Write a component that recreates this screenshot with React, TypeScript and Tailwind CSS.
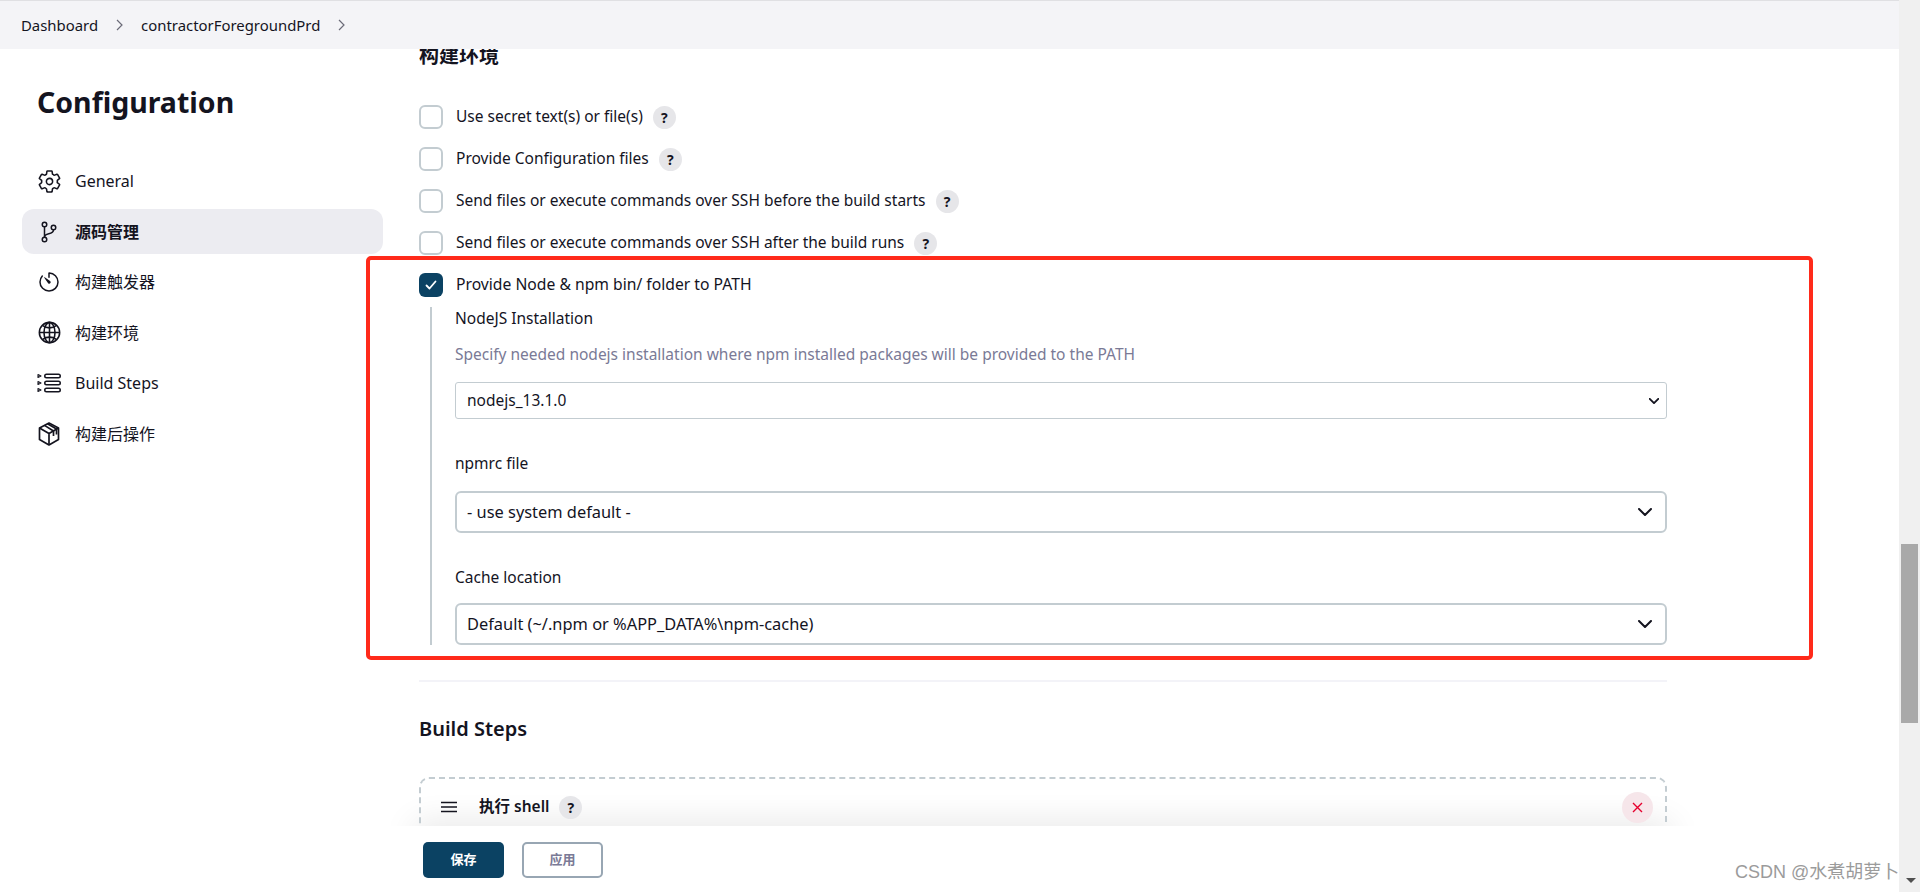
import React from 'react';
import { IoSettingsOutline, IoGitBranchOutline, IoTimerOutline, IoGlobeOutline } from 'react-icons/io5';

const font = "font-['Noto_Sans','Noto_Sans_CJK_SC',sans-serif]";

// Jenkins "build steps" list icon
const StepsIcon = () => (
    <svg width="24" height="24" viewBox="0 0 24 24" fill="none" stroke="#14141f" strokeWidth="1.5">
        <path d="M1 3.5 4 5 1 6.5Z M1 10.5 4 12 1 13.5Z M1 17.5 4 19 1 20.5Z" strokeLinejoin="round" strokeWidth="1.1" />
        <rect x="7.75" y="3.25" width="15.5" height="3.5" rx="1.75" />
        <rect x="7.75" y="10.25" width="15.5" height="3.5" rx="1.75" />
        <rect x="7.75" y="17.25" width="15.5" height="3.5" rx="1.75" />
    </svg>
);

const BoxIcon = () => (
    <svg width="24" height="24" viewBox="0 0 24 24" fill="none" stroke="#14141f" strokeWidth="1.7" strokeLinejoin="round">
        <path d="M12 1 21.5 6V17.5L12 23 2.5 17.5V6Z" />
        <path d="M2.5 6 12 11.5 21.5 6M12 11.5V23" />
        <path d="M7.5 3.4 16.5 9V14M10.5 1.8 19.5 7V12.5" />
    </svg>
);

const navItems = [
    { label: 'General', icon: <IoSettingsOutline size={25} color="#14141f" /> },
    { label: '源码管理', icon: <IoGitBranchOutline size={24} color="#14141f" />, active: true },
    { label: '构建触发器', icon: <IoTimerOutline size={24} color="#14141f" /> },
    { label: '构建环境', icon: <IoGlobeOutline size={25} color="#14141f" /> },
    { label: 'Build Steps', icon: <StepsIcon /> },
    { label: '构建后操作', icon: <BoxIcon /> },
];

const Help = () => (
    <span className="flex h-[23px] w-[23px] shrink-0 items-center justify-center rounded-full bg-[#e6e6e9] text-[14px] font-bold text-[#14141f]">?</span>
);

const CheckRow = ({ label }: { label: string }) => (
    <div className="flex h-[42px] items-center">
        <span className="h-[24px] w-[24px] shrink-0 rounded-[6px] border-2 border-[#c3ccd1] bg-white" />
        <span className="ml-[13px] mr-[10px] text-[15.5px] text-[#14141f]">{label}</span>
        <Help />
    </div>
);

const SelectBox = ({ value, thin }: { value: string; thin?: boolean }) => (
    <div
        className={
            thin
                ? 'flex h-[37px] items-center justify-between rounded-[3px] border border-[#c3ccd1] bg-white pr-[7px] pl-[11px] text-[15.5px]'
                : 'flex h-[42px] items-center justify-between rounded-[6px] border-2 border-[#c3ccd1] bg-white pr-[13px] pl-[10px] text-[16.4px]'
        }
    >
        <span className="text-[#14141f]">{value}</span>
        <svg width={thin ? 10 : 14} height={thin ? 6 : 8} viewBox="0 0 14 8" fill="none" stroke="#14141f" strokeWidth={thin ? 2.6 : 2} strokeLinecap="round" strokeLinejoin="round">
            <path d="M1 1 7 7 13 1" />
        </svg>
    </div>
);

export default function App() {
    return (
        <div className={`${font} flex h-screen w-full overflow-hidden bg-white`}>
            <div className="flex min-w-0 flex-1 flex-col">
                {/* Breadcrumb bar */}
                <div className="relative z-20 flex h-[49px] shrink-0 items-center border-t border-[#e0e0e3] bg-[#f4f4f7] pl-[21px] text-[14.9px] text-[#14141f]">
                    <span>Dashboard</span>
                    <span className="mx-[18px] text-[#6b6b78]">
                        <Chevron />
                    </span>
                    <span>contractorForegroundPrd</span>
                    <span className="mx-[18px] text-[#6b6b78]">
                        <Chevron />
                    </span>
                </div>

                <div className="relative flex min-h-0 flex-1">
                    {/* Shadow of the sticky footer, sits behind the form */}
                    <div className="absolute right-[199px] bottom-0 left-[385px] h-[40px] overflow-hidden">
                        <div className="absolute top-full right-[30px] left-[30px] h-[20px] shadow-[0_0_34px_rgba(0,0,0,0.14)]" />
                    </div>

                    {/* Sidebar */}
                    <aside className="w-[419px] shrink-0 pt-[30px] pl-[22px]">
                        <h1 className="pl-[15px] text-[28.5px] leading-[46px] font-bold text-[#14141f]">Configuration</h1>
                        <nav className="mt-[33.5px] flex w-[361px] flex-col gap-[5.5px]">
                            {navItems.map((item) => (
                                <div
                                    key={item.label}
                                    className={`flex h-[45px] items-center rounded-[12px] pl-[15px] text-[16px] text-[#14141f] ${item.active ? 'bg-[#ececf1] font-semibold' : ''}`}
                                >
                                    <span className="flex w-[38px] shrink-0 items-center">{item.icon}</span>
                                    {item.label}
                                </div>
                            ))}
                        </nav>
                    </aside>

                    {/* Form */}
                    <main className="relative z-10 min-w-0 flex-1 overflow-hidden">
                        <div className="-mt-[7px] w-[1248px]">
                            <h2 className="text-[20px] leading-[28px] font-semibold text-[#14141f]">构建环境</h2>
                            <div className="mt-[26px]">
                                <CheckRow label="Use secret text(s) or file(s)" />
                                <CheckRow label="Provide Configuration files" />
                                <CheckRow label="Send files or execute commands over SSH before the build starts" />
                                <CheckRow label="Send files or execute commands over SSH after the build runs" />
                                <div className="flex h-[42px] items-center">
                                    <span className="flex h-[24px] w-[24px] shrink-0 items-center justify-center rounded-[6px] bg-[#0b4263]">
                                        <svg width="14" height="14" viewBox="0 0 14 14" fill="none" stroke="#fff" strokeWidth="1.8" strokeLinecap="round" strokeLinejoin="round">
                                            <path d="M2.5 7.5 5.5 10.5 11.5 3.5" />
                                        </svg>
                                    </span>
                                    <span className="ml-[13px] text-[15.7px] text-[#14141f]">Provide Node &amp; npm bin/ folder to PATH</span>
                                </div>
                            </div>

                            <div className="mt-[1px] ml-[11px] border-l-2 border-[#c3ccd1] pl-[23px]">
                                <div className="text-[15.5px] leading-[22px] text-[#14141f]">NodeJS Installation</div>
                                <div className="mt-[14px] text-[15.5px] leading-[22px] text-[#7a7a96]">
                                    Specify needed nodejs installation where npm installed packages will be provided to the PATH
                                </div>
                                <div className="mt-[17px]">
                                    <SelectBox value="nodejs_13.1.0" thin />
                                </div>
                                <div className="mt-[33px] text-[15.5px] leading-[22px] text-[#14141f]">npmrc file</div>
                                <div className="mt-[17px]">
                                    <SelectBox value="- use system default -" />
                                </div>
                                <div className="mt-[33px] text-[15.5px] leading-[22px] text-[#14141f]">Cache location</div>
                                <div className="mt-[15px]">
                                    <SelectBox value="Default (~/.npm or %APP_DATA%\npm-cache)" />
                                </div>
                            </div>

                            <div className="mt-[35px] h-[2px] bg-[#f3f3f8]" />
                            <h2 className="mt-[33px] text-[20px] leading-[28px] font-semibold text-[#14141f]">Build Steps</h2>
                            <div className="mt-[34px] h-[120px] rounded-[10px] border-2 border-dashed border-[#c3ccd1] pt-[13px] pr-[12px] pl-[20px]">
                                <div className="flex h-[30px] items-center">
                                    <svg width="16" height="12" viewBox="0 0 16 12" stroke="#14141f" strokeWidth="1.4">
                                        <path d="M0 1.5H16M0 6H16M0 10.5H16" />
                                    </svg>
                                    <span className="ml-[22px] mr-[10px] text-[15.5px] font-semibold text-[#14141f]">执行 shell</span>
                                    <Help />
                                    <span className="ml-auto flex h-[31px] w-[31px] items-center justify-center rounded-full bg-[#f6e6ea]">
                                        <svg width="11" height="11" viewBox="0 0 11 11" stroke="#e6002e" strokeWidth="1.4">
                                            <path d="M1 1 10 10M10 1 1 10" />
                                        </svg>
                                    </span>
                                </div>
                            </div>
                        </div>
                    </main>
                </div>

                {/* Sticky save bar */}
                <div className="relative z-20 flex h-[66px] shrink-0 items-start gap-[18px] bg-white pt-[16px] pl-[423px]">
                    <button className="h-[36px] w-[81px] rounded-[5px] bg-[#0b4263] text-[13px] font-bold text-white">保存</button>
                    <button className="h-[36px] w-[81px] rounded-[5px] border-2 border-[#98a6b3] bg-white text-[13px] font-bold text-[#7a7a96]">应用</button>
                </div>
            </div>

            {/* Browser scrollbar */}
            <div className="flex w-[21px] shrink-0 flex-col bg-[#f0f0f0] px-[2px] pt-[544px]">
                <div className="h-[179px] bg-[#a9a9a9]" />
                <div className="mt-[155px] ml-[5px] h-0 w-0 border-x-[5px] border-t-[5px] border-x-transparent border-t-[#505050]" />
            </div>

            {/* Annotation drawn on top of the screenshot */}
            <div className="pointer-events-none absolute top-[256px] left-[366px] z-30 h-[404px] w-[1447px] rounded-[5px] border-4 border-[#ff2a1a]" />
            <div className="pointer-events-none absolute top-[860px] left-[1735px] z-30 font-['Liberation_Sans','Noto_Sans_CJK_SC',sans-serif] text-[18px] leading-[24px] text-[#9b9b9b]">
                CSDN @水煮胡萝卜
            </div>
        </div>
    );
}

function Chevron() {
    return (
        <svg width="7" height="12" viewBox="0 0 7 12" fill="none" stroke="currentColor" strokeWidth="1.2">
            <path d="M1 1 6 6 1 11" />
        </svg>
    );
}
